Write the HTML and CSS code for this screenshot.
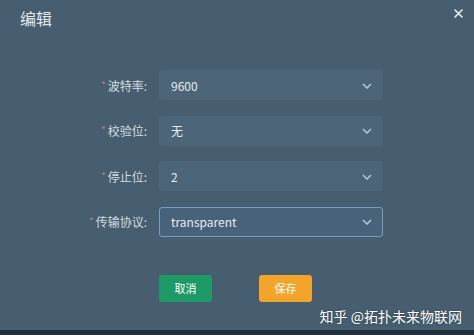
FILE: index.html
```html
<!DOCTYPE html>
<html lang="zh-CN">
<head>
  <meta charset="UTF-8" />
  <meta name="viewport" content="width=device-width, initial-scale=1.0" />
  <title>编辑</title>
  <link rel="stylesheet" href="styles.css">
</head>
<body>
  <div class="dialog">
    <div class="dialog-header">
      <span class="dialog-title">编辑</span>
      <span class="close">
        <svg width="9" height="9" viewBox="0 0 9 9"><path d="M1 1L8 8M8 1L1 8" stroke="#e6edf2" stroke-width="1.6" stroke-linecap="round"/></svg>
      </span>
    </div>

    <div class="form">
      <div class="form-row">
        <label class="form-label"><i>*</i>波特率:</label>
        <div class="select">
          <span>9600</span>
          <svg class="arrow" width="10" height="6" viewBox="0 0 10 6"><path d="M1 1L5 5L9 1" fill="none" stroke="#b9c8d4" stroke-width="1.5"/></svg>
        </div>
      </div>
      <div class="form-row">
        <label class="form-label"><i>*</i>校验位:</label>
        <div class="select">
          <span>无</span>
          <svg class="arrow" width="10" height="6" viewBox="0 0 10 6"><path d="M1 1L5 5L9 1" fill="none" stroke="#b9c8d4" stroke-width="1.5"/></svg>
        </div>
      </div>
      <div class="form-row">
        <label class="form-label"><i>*</i>停止位:</label>
        <div class="select">
          <span>2</span>
          <svg class="arrow" width="10" height="6" viewBox="0 0 10 6"><path d="M1 1L5 5L9 1" fill="none" stroke="#b9c8d4" stroke-width="1.5"/></svg>
        </div>
      </div>
      <div class="form-row">
        <label class="form-label"><i>*</i>传输协议:</label>
        <div class="select focused">
          <span>transparent</span>
          <svg class="arrow" width="10" height="6" viewBox="0 0 10 6"><path d="M1 1L5 5L9 1" fill="none" stroke="#b9c8d4" stroke-width="1.5"/></svg>
        </div>
      </div>
    </div>

    <div class="dialog-footer">
      <button class="btn btn-cancel">取消</button>
      <button class="btn btn-save">保存</button>
    </div>

    <div class="watermark">知乎 @拓扑未来物联网</div>
  </div>
  <div class="bottom-strip"></div>
</body>
</html>
```

FILE: styles.css
```css
/* Base */
body {
  margin: 0;
  padding: 0;
  background-color: #465e6f;
  font-family: "Noto Sans CJK SC", "Liberation Sans", sans-serif;
  color: #dde5ea;
}

.dialog {
  position: relative;
  height: 330px;
  box-sizing: border-box;
  background-color: #465e6f;
}

/* Header */
.dialog-header {
  display: flex;
  justify-content: space-between;
  align-items: flex-start;
  padding: 7px 11px 0 20px;
  height: 63px;
  box-sizing: border-box;
}

.dialog-title {
  font-size: 16px;
  line-height: 22px;
  color: #e2e8ec;
}

.close {
  display: flex;
  margin-top: 2px;
}

/* Form */
.form {
  display: flex;
  flex-direction: column;
  gap: 15.5px;
  padding-left: 60px;
  padding-top: 7px;
}

.form-row {
  display: flex;
  align-items: center;
  gap: 12px;
}

.form-label {
  width: 87px;
  text-align: right;
  font-size: 12px;
  color: #d3dce2;
}

.form-label i {
  font-style: normal;
  color: #b07f8a;
  font-size: 10px;
  margin-right: 2px;
  position: relative;
  top: -2px;
}

.select {
  width: 224px;
  height: 30px;
  box-sizing: border-box;
  display: flex;
  align-items: center;
  justify-content: space-between;
  padding: 0 10px 0 11px;
  background-color: #4c6579;
  border: 1px solid #4c6579;
  border-radius: 3px;
  font-size: 12px;
  color: #e6ecf0;
}

.select.focused {
  background-color: #48627a;
  border-color: #7b9dbd;
}

.arrow {
  margin-top: 1px;
}

/* Footer */
.dialog-footer {
  display: flex;
  gap: 47px;
  padding-left: 159px;
  margin-top: 38px;
}

.btn {
  width: 53px;
  height: 27px;
  border: none;
  border-radius: 3px;
  font-family: "Noto Sans CJK SC", sans-serif;
  font-size: 11px;
  color: #fff;
  padding: 0;
  cursor: pointer;
}

.btn-cancel {
  background-color: #1d9a65;
}

.btn-save {
  background-color: #f3a42a;
}

/* Watermark */
.watermark {
  position: absolute;
  right: 12px;
  bottom: 4px;
  font-size: 14px;
  color: #ffffff;
  text-shadow: 0 0 2px rgba(0, 0, 0, 0.4);
}

.bottom-strip {
  height: 5px;
  background-color: #22303c;
}
```
